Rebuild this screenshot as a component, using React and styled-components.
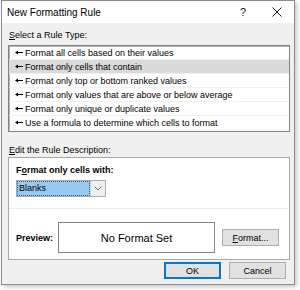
import React, { useState } from 'react';
import styled, { createGlobalStyle } from 'styled-components';

const GlobalStyle = createGlobalStyle`
  html, body {
    margin: 0;
    padding: 0;
    background: #ffffff;
  }
  body {
    font-family: "Liberation Sans", Arial, sans-serif;
    font-size: 9px;
    color: #000;
  }
`;

const Screen = styled.div`
  width: 300px;
  height: 290px;
  padding-left: 1px;
  box-sizing: border-box;
  background: #ffffff;
  overflow: hidden;
`;

const Window = styled.div`
  width: 294px;
  height: 285px;
  box-sizing: border-box;
  border: 1px solid #8c8c8c;
  background: #f0f0f0;
  display: flex;
  flex-direction: column;
  box-shadow: 2px 2px 4px rgba(0, 0, 0, 0.22);
`;

const TitleBar = styled.div`
  height: 22px;
  flex: none;
  background: #ffffff;
  display: flex;
  align-items: center;
  padding-left: 5px;
  font-size: 10px;
`;

const Title = styled.span`
  flex: 1;
`;

const TitleButton = styled.span`
  width: 34px;
  height: 22px;
  display: flex;
  align-items: center;
  justify-content: center;
  font-size: 11px;
  color: #1a1a1a;
`;

const Body = styled.div`
  flex: 1;
  display: flex;
  flex-direction: column;
  padding: 0 4px 0 6px;
`;

const SectionLabel = styled.div`
  height: 12px;
  line-height: 12px;
  padding-left: 1px;
  margin: ${p => p.$margin};
`;

const Key = styled.span`
  text-decoration: underline;
  text-underline-offset: 1px;
`;

const ListBox = styled.div`
  background: #ffffff;
  border: 1px solid #828282;
  box-shadow: inset 1px 1px 0 #b4b4b4;
  padding-bottom: 1px;
`;

const Row = styled.div`
  height: 14px;
  box-sizing: border-box;
  display: flex;
  align-items: center;
  gap: 2px;
  padding-left: 6px;
  border-bottom: 1px solid #f0f0f0;
  background: ${p => (p.$selected ? '#dadada' : 'transparent')};
  white-space: nowrap;
  cursor: default;
`;

const Panel = styled.div`
  background: #ffffff;
  border: 1px solid #a8a8a8;
  height: 103px;
  box-sizing: border-box;
  display: flex;
  flex-direction: column;
`;

const PanelTop = styled.div`
  height: 51px;
  flex: none;
  border-bottom: 1px solid #ebebeb;
  padding: 6px 7px 0;
  box-sizing: border-box;
`;

const BoldLabel = styled.div`
  font-weight: 700;
  height: 12px;
  line-height: 12px;
  white-space: nowrap;
`;

const Combo = styled.div`
  margin-top: 4px;
  width: 90px;
  height: 17px;
  border: 1px solid #acacac;
  display: flex;
  box-sizing: border-box;
  background: #ffffff;
`;

const ComboValue = styled.div`
  flex: 1;
  background: #99c9ef;
  outline: 1px dotted #2f5f8f;
  outline-offset: -1px;
  padding-left: 2px;
  line-height: 15px;
`;

const ComboArrow = styled.div`
  width: 14px;
  display: flex;
  align-items: center;
  justify-content: center;
  border-left: 1px solid #cfcfcf;
  background: #efefef;
`;

const PreviewRow = styled.div`
  flex: 1;
  display: flex;
  align-items: center;
  padding: 7px 7px 0;
`;

const PreviewBox = styled.div`
  width: 157px;
  height: 31px;
  margin-left: 5px;
  box-sizing: border-box;
  border: 1px solid #828282;
  display: flex;
  align-items: center;
  justify-content: center;
  font-size: 11px;
`;

const Button = styled.button`
  width: 57px;
  height: 17px;
  box-sizing: border-box;
  padding: 0;
  font-family: inherit;
  font-size: 9px;
  color: #000;
  background: #e1e1e1;
  border: 1px solid ${p => (p.$default ? '#0078d7' : '#adadad')};
  box-shadow: ${p => (p.$default ? 'inset 0 0 0 1px #0078d7' : 'none')};
`;

const FormatButton = styled(Button)`
  margin-left: 7px;
`;

const Footer = styled.div`
  display: flex;
  justify-content: flex-end;
  gap: 8px;
  padding: 2px 4px 0 0;
`;

const Bullet = () => (
  <svg width="8" height="5" viewBox="0 0 8 5">
    <path d="M0 2.5 L3 0.5 L3 4.5 Z" fill="#000" />
    <rect x="2" y="2" width="6" height="1" fill="#000" />
  </svg>
);

const Chevron = () => (
  <svg width="8" height="5" viewBox="0 0 8 5">
    <path d="M0.5 0.5 L4 4 L7.5 0.5" fill="none" stroke="#707070" strokeWidth="1" />
  </svg>
);

const CloseIcon = () => (
  <svg width="10" height="10" viewBox="0 0 10 10">
    <path d="M0.5 0.5 L9.5 9.5 M9.5 0.5 L0.5 9.5" stroke="#1a1a1a" strokeWidth="1" />
  </svg>
);

const ruleTypes = [
  'Format all cells based on their values',
  'Format only cells that contain',
  'Format only top or bottom ranked values',
  'Format only values that are above or below average',
  'Format only unique or duplicate values',
  'Use a formula to determine which cells to format',
];

export default function App() {
  const [selected, setSelected] = useState(1);

  return (
    <Screen>
      <GlobalStyle />
      <Window>
        <TitleBar>
          <Title>New Formatting Rule</Title>
          <TitleButton>?</TitleButton>
          <TitleButton>
            <CloseIcon />
          </TitleButton>
        </TitleBar>
        <Body>
          <SectionLabel $margin="6px 0 4px">
            <Key>S</Key>elect a Rule Type:
          </SectionLabel>
          <ListBox>
            {ruleTypes.map((text, i) => (
              <Row key={text} $selected={i === selected} onClick={() => setSelected(i)}>
                <Bullet />
                {text}
              </Row>
            ))}
          </ListBox>
          <SectionLabel $margin="12px 0 1px">
            <Key>E</Key>dit the Rule Description:
          </SectionLabel>
          <Panel>
            <PanelTop>
              <BoldLabel>
                F<Key>o</Key>rmat only cells with:
              </BoldLabel>
              <Combo>
                <ComboValue>Blanks</ComboValue>
                <ComboArrow>
                  <Chevron />
                </ComboArrow>
              </Combo>
            </PanelTop>
            <PreviewRow>
              <BoldLabel>Preview:</BoldLabel>
              <PreviewBox>No Format Set</PreviewBox>
              <FormatButton>
                <Key>F</Key>ormat...
              </FormatButton>
            </PreviewRow>
          </Panel>
          <Footer>
            <Button $default>OK</Button>
            <Button>Cancel</Button>
          </Footer>
        </Body>
      </Window>
    </Screen>
  );
}
